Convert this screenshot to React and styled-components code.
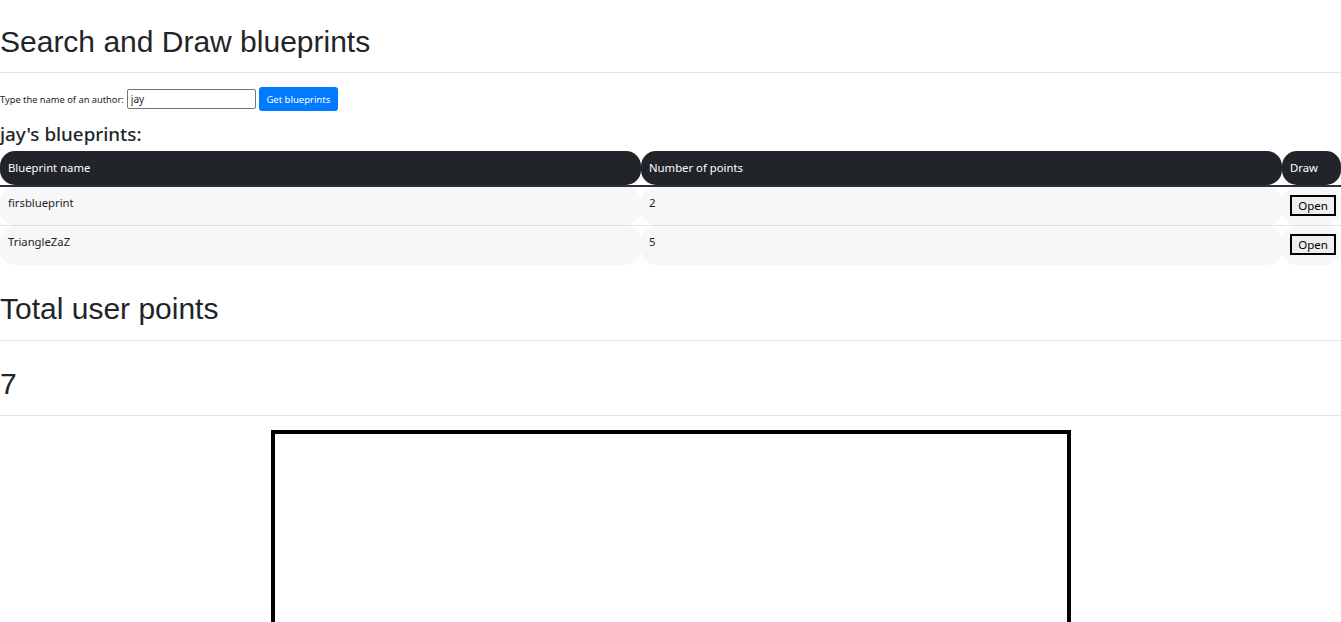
import React from "react";
import styled, { createGlobalStyle } from "styled-components";

const GlobalStyle = createGlobalStyle`
  * { box-sizing: border-box; }
  body {
    margin: 0;
    background: #fff;
    color: #212529;
    font-family: "Noto Sans", "Open Sans", sans-serif;
  }
`;

const blueprints = [
  { name: "firsblueprint", points: 2 },
  { name: "TriangleZaZ", points: 5 },
];

const App = () => {
  const total = blueprints.reduce((sum, bp) => sum + bp.points, 0);
  return (
    <Page>
      <GlobalStyle />
      <BigTitle top={23}>Search and Draw blueprints</BigTitle>
      <Divider />
      <SearchForm onSubmit={(e) => e.preventDefault()}>
        <Label htmlFor="author">Type the name of an author:</Label>
        <Input id="author" defaultValue="jay" />
        <SearchButton type="submit">Get blueprints</SearchButton>
      </SearchForm>
      <SubTitle>jay's blueprints:</SubTitle>
      <Table>
        <HeadRow>
          <HeadCell>Blueprint name</HeadCell>
          <HeadCell>Number of points</HeadCell>
          <HeadCell>Draw</HeadCell>
        </HeadRow>
        {blueprints.map((bp) => (
          <BodyRow key={bp.name}>
            <Cell>{bp.name}</Cell>
            <Cell>{bp.points}</Cell>
            <Cell>
              <OpenButton>Open</OpenButton>
            </Cell>
          </BodyRow>
        ))}
      </Table>
      <BigTitle top={25}>Total user points</BigTitle>
      <Divider gap={12} />
      <BigTitle top={24}>{total}</BigTitle>
      <Divider gap={12} />
      <Canvas />
    </Page>
  );
};

const Page = styled.div`
  width: 100%;
`;

const BigTitle = styled.h1`
  margin: ${(p) => p.top}px 0 0;
  font-family: "Liberation Sans", Arial, sans-serif;
  font-size: 30px;
  font-weight: 400;
  line-height: 38px;
  color: #212529;
`;

const Divider = styled.hr`
  margin: ${(p) => p.gap || 11}px 0 0;
  border: 0;
  border-top: 1px solid #e5e5e5;
`;

const SearchForm = styled.form`
  display: flex;
  align-items: center;
  gap: 3px;
  margin-top: 14px;
  height: 24px;
`;

const Label = styled.label`
  font-size: 9.3px;
  color: #212529;
`;

const Input = styled.input`
  width: 129px;
  height: 20px;
  padding: 1px 3px;
  border: 1px solid #767676;
  border-radius: 2px;
  font-family: "Noto Sans", sans-serif;
  font-size: 10px;
  color: #212529;
  outline: none;
`;

const SearchButton = styled.button`
  width: 79px;
  height: 24px;
  padding: 0;
  border: 0;
  border-radius: 3px;
  background: #007bff;
  color: #fff;
  font-family: "Noto Sans", sans-serif;
  font-size: 9.5px;
`;

const SubTitle = styled.h5`
  margin: 11px 0 5px;
  font-size: 18.8px;
  font-weight: 500;
  line-height: 24px;
`;

const Table = styled.div`
  width: 100%;
  font-size: 11.3px;
`;

const Row = styled.div`
  display: grid;
  grid-template-columns: 1fr 1fr 59px;
`;

const HeadRow = styled(Row)`
  border-bottom: 2px solid #2b3035;
`;

const BodyRow = styled(Row)`
  & + & {
    border-top: 1px solid #dee2e6;
  }
  &:last-child > div {
    min-height: 39px;
  }
`;

const HeadCell = styled.div`
  padding: 8px;
  height: 34px;
  line-height: 18px;
  background: #212529;
  color: #fff;
  border-radius: 15px;
`;

const Cell = styled.div`
  padding: 7px 8px 8px;
  min-height: 38px;
  line-height: 18px;
  background: #f7f7f7;
  color: #212529;
  border-radius: 15px;
`;

const OpenButton = styled.button`
  display: block;
  width: 46px;
  height: 21px;
  margin-top: 1px;
  padding: 0;
  border: 2px solid #000;
  background: #efefef;
  font-family: "Noto Sans", sans-serif;
  font-size: 11.5px;
  color: #000;
`;

const Canvas = styled.div`
  width: 800px;
  height: 600px;
  margin: 14px auto 0;
  border: 4px solid #000;
  background: #fff;
`;

export default App;
